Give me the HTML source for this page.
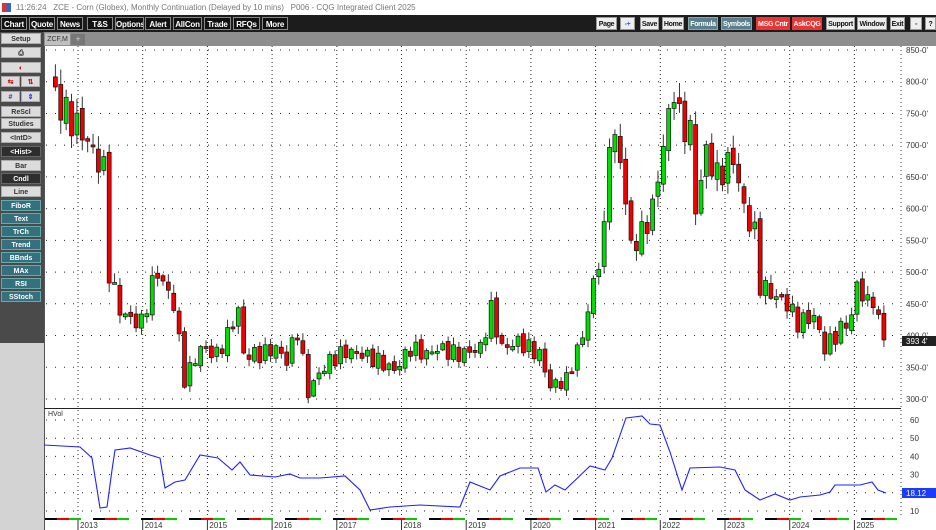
<!DOCTYPE html>
<html><head><meta charset="utf-8">
<style>
*{margin:0;padding:0;box-sizing:border-box}
body{width:936px;height:530px;overflow:hidden;background:#fff;font-family:"Liberation Sans",sans-serif;position:relative}
#title{position:absolute;left:0;top:0;width:936px;height:15px;background:#fff;font-size:8px;color:#777;line-height:15px;padding-left:16px}
#title i{position:absolute;left:2px;top:3px;width:9px;height:9px;background:linear-gradient(90deg,#d33 50%,#36c 50%)}
#tb{position:absolute;left:0;top:15px;width:936px;height:17px;background:#1c1c1c}
.b{position:absolute;top:2px;height:13px;font-size:8px;font-weight:bold;line-height:13px;text-align:center;color:#fff;background:#111;border:1px solid #888;white-space:nowrap;overflow:hidden;letter-spacing:-0.2px}
.l,.t,.r{font-size:7px;letter-spacing:-0.3px}
.l{background:#eee;color:#111;border-color:#999}
.t{background:#5b7f8c;color:#fff;border-color:#8aa}
.r{background:#e33;color:#fff;border-color:#e33}
#strip{position:absolute;left:0;top:32px;width:936px;height:14px;background:#8e8e8e}
#tab{position:absolute;left:45px;top:33px;width:25px;height:12px;background:#bfbfbf;border-top:1px solid #e0a040;font-size:7px;line-height:11px;color:#333;text-align:center}
#tab2{position:absolute;left:71px;top:34px;width:14px;height:11px;background:#777;color:#ccc;font-size:9px;line-height:10px;text-align:center}
#side{position:absolute;left:0;top:32px;width:44px;height:498px;background:#d3d3d3}
#sdark{position:absolute;left:0;top:0;width:44px;height:311px;background:#4a4a4a}
.s{position:absolute;left:1px;width:40px;height:11px;font-size:7px;font-weight:bold;text-align:center;line-height:11px;background:#dcdcdc;color:#333;border:1px solid #aaa}
.sd{background:#2e2e2e;color:#fff;border-color:#666}
.st{background:#35707f;color:#fff;border-color:#6aa}
#chart{position:absolute;left:0;top:0}
</style></head><body>
<div id="title"><i></i>11:26:24 &nbsp; ZCE - Corn (Globex), Monthly Continuation (Delayed by 10 mins) &nbsp; P006 - CQG Integrated Client 2025</div>
<div id="tb">
<div class="b" style="left:1px;width:26px">Chart</div>
<div class="b" style="left:29px;width:26px">Quote</div>
<div class="b" style="left:57px;width:26px">News</div>
<div class="b" style="left:87px;width:26px">T&amp;S</div>
<div class="b" style="left:115px;width:29px">Options</div>
<div class="b" style="left:145px;width:26px">Alert</div>
<div class="b" style="left:173px;width:29px">AllCon</div>
<div class="b" style="left:204px;width:27px">Trade</div>
<div class="b" style="left:233px;width:27px">RFQs</div>
<div class="b" style="left:262px;width:26px">More</div>
<div class="b l" style="left:596px;width:21px">Page</div>
<div class="b l" style="left:620px;width:15px;color:#36c">-+</div>
<div class="b l" style="left:640px;width:19px">Save</div>
<div class="b l" style="left:662px;width:22px">Home</div>
<div class="b t" style="left:688px;width:30px">Formula</div>
<div class="b t" style="left:721px;width:31px">Symbols</div>
<div class="b r" style="left:756px;width:34px">MSG Cntr</div>
<div class="b r" style="left:792px;width:30px">AskCQG</div>
<div class="b l" style="left:826px;width:29px">Support</div>
<div class="b l" style="left:857px;width:30px">Window</div>
<div class="b l" style="left:890px;width:15px">Exit</div>
<div class="b l" style="left:910px;width:12px">▫</div>
<div class="b l" style="left:925px;width:11px">?</div>
</div>
<div id="strip"></div>
<div id="tab">ZCF,M</div><div id="tab2">+</div>
<div id="side"><div id="sdark"></div>
<div class="s" style="top:1px">Setup</div>
<div class="s" style="top:15px">⎙</div>
<div class="s" style="top:30px;color:#c00">◐</div>
<div class="s" style="top:44px;width:19px;color:#c00">⇆</div><div class="s" style="top:44px;left:21px;width:19px;color:#c00">⇅</div>
<div class="s" style="top:59px;width:19px;color:#33c">#</div><div class="s" style="top:59px;left:21px;width:19px;color:#33c">⇕</div>
<div class="s" style="top:74px">ReScl</div>
<div class="s" style="top:86px">Studies</div>
<div class="s" style="top:100px">&lt;IntD&gt;</div>
<div class="s sd" style="top:114px">&lt;Hist&gt;</div>
<div class="s" style="top:128px">Bar</div>
<div class="s sd" style="top:141px">Cndl</div>
<div class="s" style="top:154px">Line</div>
<div class="s st" style="top:168px">FiboR</div>
<div class="s st" style="top:181px">Text</div>
<div class="s st" style="top:194px">TrCh</div>
<div class="s st" style="top:207px">Trend</div>
<div class="s st" style="top:220px">BBnds</div>
<div class="s st" style="top:233px">MAx</div>
<div class="s st" style="top:246px">RSI</div>
<div class="s st" style="top:259px">SStoch</div>
</div>
<svg id="chart" width="936" height="530" xmlns="http://www.w3.org/2000/svg"></svg>
<script>
var s='';
function py(p){return 50+(850-p)*0.6345;}
function vy(v){return 420+(60-v)*1.82;}
s+='<rect x="44" y="46" width="892" height="484" fill="#fff"/>';
s+='<line x1="44.5" y1="46" x2="44.5" y2="530" stroke="#555"/>';
for(var p=300;p<=850;p+=50){var y=py(p);s+='<line x1="46" y1="'+y+'" x2="900" y2="'+y+'" stroke="#222" stroke-dasharray="1,8"/>';
s+='<text x="906" y="'+(y+3)+'" font-size="8" fill="#333">'+p+'-0\'</text>';}
for(var v=10;v<=60;v+=10){var y=vy(v);s+='<line x1="46" y1="'+y+'" x2="900" y2="'+y+'" stroke="#222" stroke-dasharray="1,8"/>';
s+='<text x="910" y="'+(y+3)+'" font-size="8" fill="#333">'+v+'</text>';}
for(var Y=2013;Y<=2025;Y++){var x=78+64.7*(Y-2013);s+='<line x1="'+x+'" y1="46" x2="'+x+'" y2="518" stroke="#222" stroke-dasharray="1,3"/>';
s+='<line x1="'+x+'" y1="520" x2="'+x+'" y2="530" stroke="#333"/><text x="'+(x+2)+'" y="528" font-size="8" fill="#333">'+Y+'</text>';}
s+='<line x1="901" y1="46" x2="901" y2="518" stroke="#333" stroke-dasharray="1,3"/>';
s+='<line x1="44" y1="408.5" x2="901" y2="408.5" stroke="#222"/>';
s+='<text x="48" y="416" font-size="7" fill="#333">HVol</text>';
var cols=['#000','#e00','#0c0','#fff'];
for(var i=0;i<72;i++){s+='<rect x="'+(45+i*12)+'" y="518" width="12" height="2" fill="'+cols[i%4]+'"/>';}
var A=[[0,800],[2,760],[4,740],[6,720],[8,690],[10,660],[11,500],[13,440],[15,425],[17,420],[19,480],[20,500],[23,450],[25,330],[28,380],[31,370],[33,400],[35,440],[36,370],[39,370],[42,380],[44,360],[46,410],[48,310],[50,340],[52,360],[55,375],[58,370],[61,360],[64,345],[67,380],[70,370],[72,380],[76,370],[80,380],[82,440],[84,380],[87,390],[89,380],[91,370],[93,320],[96,330],[99,400],[101,480],[103,560],[104,720],[106,680],[108,540],[110,560],[112,600],[114,700],[116,790],[117,740],[119,720],[120,600],[122,690],[124,650],[127,680],[129,600],[131,560],[132,480],[135,460],[137,450],[139,420],[142,430],[144,380],[147,410],[149,430],[150,480],[152,450],[153,460],[154,420],[155,393]];
var C=[];
for(var k=0;k<A.length-1;k++){var a=A[k],b=A[k+1];for(var i=a[0];i<b[0];i++){C[i]=a[1]+(b[1]-a[1])*(i-a[0])/(b[0]-a[0]);}}
C[155]=393;
for(var i=1;i<155;i++){C[i]*=1+0.035*Math.sin(i*2.7);}
for(var i=1;i<=155;i++){var o=C[i-1]*(1+0.01*Math.sin(i*1.3)),c=C[i];
var hi=Math.max(o,c)*(1+0.025*Math.abs(Math.sin(i*0.9))+0.005),lo=Math.min(o,c)*(1-0.025*Math.abs(Math.cos(i*1.7))-0.005);
var x=50+i*5.38;
s+='<line x1="'+x+'" y1="'+py(hi)+'" x2="'+x+'" y2="'+py(lo)+'" stroke="#333"/>';
var t=py(Math.max(o,c)),bt=py(Math.min(o,c));if(bt-t<2)bt=t+2;
s+='<rect x="'+(x-2)+'" y="'+t+'" width="4" height="'+(bt-t)+'" fill="'+(c>=o?'#0d0':'#e00')+'" stroke="#111" stroke-width="0.7"/>';}
var H=[[44,445],[80,447],[92,458],[100,508],[107,507],[112,470],[115,450],[130,448],[150,455],[160,458],[165,488],[175,482],[185,480],[200,455],[218,458],[232,470],[240,462],[250,475],[275,477],[290,474],[300,478],[320,478],[345,476],[360,490],[370,510],[390,507],[420,505],[460,507],[470,482],[490,490],[500,476],[520,468],[538,468],[546,492],[555,485],[565,490],[590,466],[605,470],[612,458],[626,418],[642,416],[650,424],[660,425],[670,452],[682,490],[690,468],[720,467],[735,470],[745,490],[760,500],[775,494],[790,500],[800,497],[820,495],[830,492],[835,485],[860,485],[872,482],[878,490],[886,493]];
s+='<polyline fill="none" stroke="#2020ff" stroke-width="1.1" points="'+H.map(function(p){return p.join(',')}).join(' ')+'"/>';
s+='<rect x="902" y="336" width="34" height="10" fill="#222"/><text x="906" y="344" font-size="8" fill="#fff">393 4\'</text>';
s+='<rect x="902" y="488" width="34" height="10" fill="#1a3cff"/><text x="906" y="496" font-size="8" fill="#fff">18.12</text>';
document.getElementById('chart').innerHTML=s;
</script>
</body></html>
